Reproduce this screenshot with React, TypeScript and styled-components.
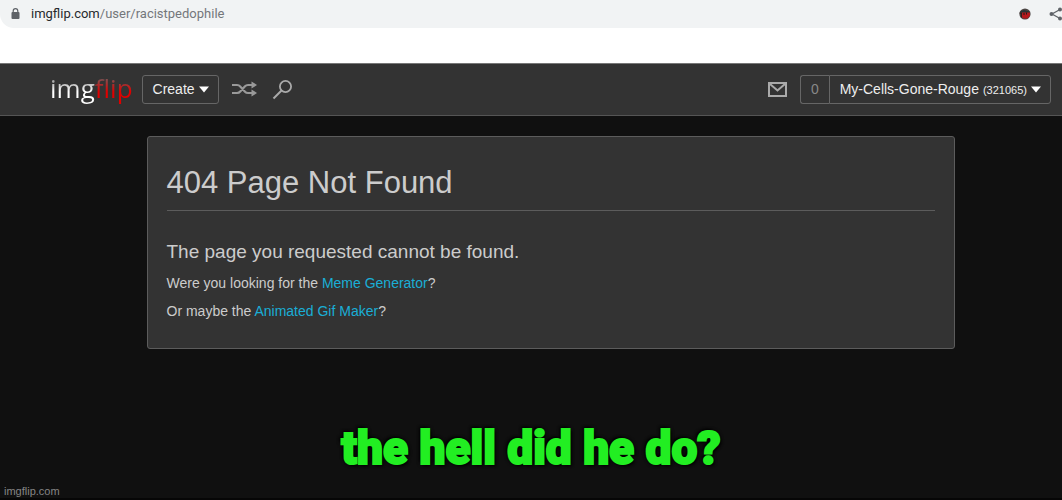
import React from "react";
import styled, { createGlobalStyle } from "styled-components";

const GlobalStyle = createGlobalStyle`
  *, *::before, *::after { box-sizing: border-box; }
  html, body { margin: 0; padding: 0; }
  body {
    background: #101010;
    color: #cccccc;
    font-family: "Liberation Sans", Arial, sans-serif;
    font-size: 14px;
  }
  h1, p { margin: 0; font-weight: 400; }
`;

const Page = styled.div`
  min-height: 100vh;
  display: flex;
  flex-direction: column;
  background: #101010;
`;

const BrowserBar = styled.div`
  height: 63px;
  background: #ffffff;
  flex: none;
`;

const AddressBar = styled.div`
  display: flex;
  align-items: center;
  height: 28px;
  padding-left: 11px;
  background: #f1f3f4;
  border-bottom-left-radius: 14px;
  overflow: hidden;
`;

const Address = styled.div`
  flex: 1;
  margin-left: 11px;
  font-family: Roboto, sans-serif;
  font-size: 13px;
  line-height: 28px;
  color: #74777b;
`;

const Host = styled.span`
  color: #27292c;
`;

const BarIcons = styled.div`
  display: flex;
  align-items: center;
  gap: 18px;
  flex: none;
`;

const Header = styled.header`
  display: flex;
  align-items: center;
  height: 53px;
  padding: 0 11px 1px 50px;
  background: #333333;
  border-top: 1px solid #777777;
  border-bottom: 1px solid #555555;
  flex: none;
`;

const Logo = styled.a`
  font-family: "Open Sans", sans-serif;
  font-size: 26px;
  font-weight: 500;
  line-height: 36px;
  padding-bottom: 2px;
  text-decoration: none;
  margin-right: 9px;
`;

const LogoPart = styled.span<{ $from: string; $to: string }>`
  background: linear-gradient(${(p) => p.$from} 25%, ${(p) => p.$to} 60%);
  background-clip: text;
  -webkit-background-clip: text;
  color: transparent;
`;

const OutlineButton = styled.button`
  display: flex;
  align-items: center;
  height: 29px;
  padding: 0 9px 0 10px;
  gap: 4px;
  color: #eeeeee;
  background: transparent;
  border: 1px solid #666666;
  border-radius: 3px;
  font: 14px "Liberation Sans", Arial, sans-serif;
  white-space: nowrap;
`;

const IconButton = styled.button`
  display: flex;
  padding: 0;
  border: 0;
  background: none;
`;

const Tools = styled.div`
  display: flex;
  align-items: center;
  gap: 15px;
  margin-left: 12px;
`;

const Account = styled.div`
  display: flex;
  align-items: center;
  margin-left: auto;
`;

const Count = styled(OutlineButton)`
  margin-left: 13px;
  padding: 0 10px;
  color: #888888;
  border-right: 0;
  border-radius: 3px 0 0 3px;
`;

const UserButton = styled(OutlineButton)`
  border-radius: 0 3px 3px 0;
`;

const Points = styled.span`
  font-size: 11px;
  line-height: 15px;
  padding-top: 2px;
`;

const Main = styled.main`
  padding: 20px 11px 0 50px;
`;

const Panel = styled.section`
  max-width: 808px;
  margin: 0 auto;
  padding: 19px 19px 23px;
  background: #333333;
  border: 1px solid #5c5c5c;
  border-radius: 3px;
`;

const Title = styled.h1`
  padding: 8px 0 9px;
  margin-bottom: 27px;
  border-bottom: 1px solid #5c5c5c;
  font-size: 31px;
  line-height: 37px;
`;

const Lead = styled.p`
  font-size: 19px;
  line-height: 28px;
  margin-bottom: 3px;
`;

const Line = styled.p`
  font-size: 14px;
  line-height: 28px;
`;

const TextLink = styled.a`
  color: #1aaed6;
  text-decoration: none;
`;

const Caption = styled.p`
  margin-top: auto;
  text-align: center;
  font-family: Impact, Roboto, sans-serif;
  font-size: 46px;
  line-height: 60px;
  font-weight: 900;
  color: #22ee22;
  -webkit-text-stroke: 2px #22ee22;
  text-shadow: 0 0 4px #000000, 2px 2px 3px #000000, -2px -2px 3px #000000;
`;

const Footer = styled.footer`
  padding: 7px 4px 0;
  font-size: 11px;
  line-height: 13px;
  color: #858585;
  border-bottom: 2px solid #060606;
`;

const Caret = () => (
  <svg width="10" height="7" viewBox="0 0 10 7" aria-hidden="true">
    <path d="M0 .5h10L5 6.5z" fill="#fff" />
  </svg>
);

export default function App() {
  return (
    <Page>
      <GlobalStyle />
      <BrowserBar>
        <AddressBar>
          <svg width="9" height="12" viewBox="0 0 9 12" aria-hidden="true">
            <path d="M2.2 5V3a2.3 2.3 0 0 1 4.6 0v2" fill="none" stroke="#5f6368" strokeWidth="1.2" />
            <rect x=".5" y="4" width="8" height="7" rx="1" fill="#5f6368" />
          </svg>
          <Address>
            <Host>imgflip.com</Host>/user/racistpedophile
          </Address>
          <BarIcons>
            <svg width="12" height="12" viewBox="0 0 12 12" aria-hidden="true">
              <circle cx="6" cy="6" r="5.6" fill="#4b4543" />
              <path d="M1 3.5 5 2l5.5 1.4L11 5H3z" fill="#293536" />
              <path d="M3 4.5h8v3L8.5 10.5H4L2.5 8z" fill="#b5191d" />
              <path d="M.5 5h1.8v4.5M5 5v2M7.5 4.5v2" fill="none" stroke="#241a1b" />
            </svg>
            <svg width="13" height="14" viewBox="0 0 13 14" aria-hidden="true">
              <path d="m11 2.5-8 4.5 8 4.5" fill="none" stroke="#5f6368" strokeWidth="1.3" />
              <circle cx="2.5" cy="7" r="2" fill="#5f6368" />
              <circle cx="11" cy="2.5" r="2" fill="#5f6368" />
              <circle cx="11" cy="11.5" r="2" fill="#5f6368" />
            </svg>
          </BarIcons>
        </AddressBar>
      </BrowserBar>

      <Header>
        <Logo href="#">
          <LogoPart $from="#999999" $to="#ffffff">img</LogoPart>
          <LogoPart $from="#805050" $to="#e00000">flip</LogoPart>
        </Logo>
        <OutlineButton>
          Create <Caret />
        </OutlineButton>
        <Tools>
          <IconButton aria-label="Shuffle">
            <svg width="26" height="16" viewBox="0 0 26 16" fill="none" stroke="#999" strokeWidth="2.2">
              <path d="M1 4h5q2 0 3.500 1.800l4.500 4.900q1.200 1.300 3 1.300H22M1 12h5q2 0 3.500-1.800L14 5.300Q15.200 4 17 4h5" />
              <path d="M20.500 .5v7L26 4zM20.500 8.500v7L26 12z" fill="#999" stroke="none" />
            </svg>
          </IconButton>
          <IconButton aria-label="Search">
            <svg width="21" height="21" viewBox="0 0 21 21" fill="none" stroke="#aaa" strokeWidth="1.8">
              <circle cx="13.5" cy="7.5" r="5.6" />
              <path d="m9.5 11.5-8 8" strokeWidth="2" />
            </svg>
          </IconButton>
        </Tools>
        <Account>
          <IconButton aria-label="Messages">
            <svg width="19" height="15" viewBox="0 0 19 15" fill="none" stroke="#aaa" strokeWidth="2">
              <path d="M1 1h17v13H1zM2 2l7.5 6.5L17 2" />
            </svg>
          </IconButton>
          <Count>0</Count>
          <UserButton>
            My-Cells-Gone-Rouge <Points>(321065)</Points> <Caret />
          </UserButton>
        </Account>
      </Header>

      <Main>
        <Panel>
          <Title>404 Page Not Found</Title>
          <Lead>The page you requested cannot be found.</Lead>
          <Line>
            Were you looking for the <TextLink href="#">Meme Generator</TextLink>?
          </Line>
          <Line>
            Or maybe the <TextLink href="#">Animated Gif Maker</TextLink>?
          </Line>
        </Panel>
      </Main>

      <Caption>the hell did he do?</Caption>
      <Footer>imgflip.com</Footer>
    </Page>
  );
}
